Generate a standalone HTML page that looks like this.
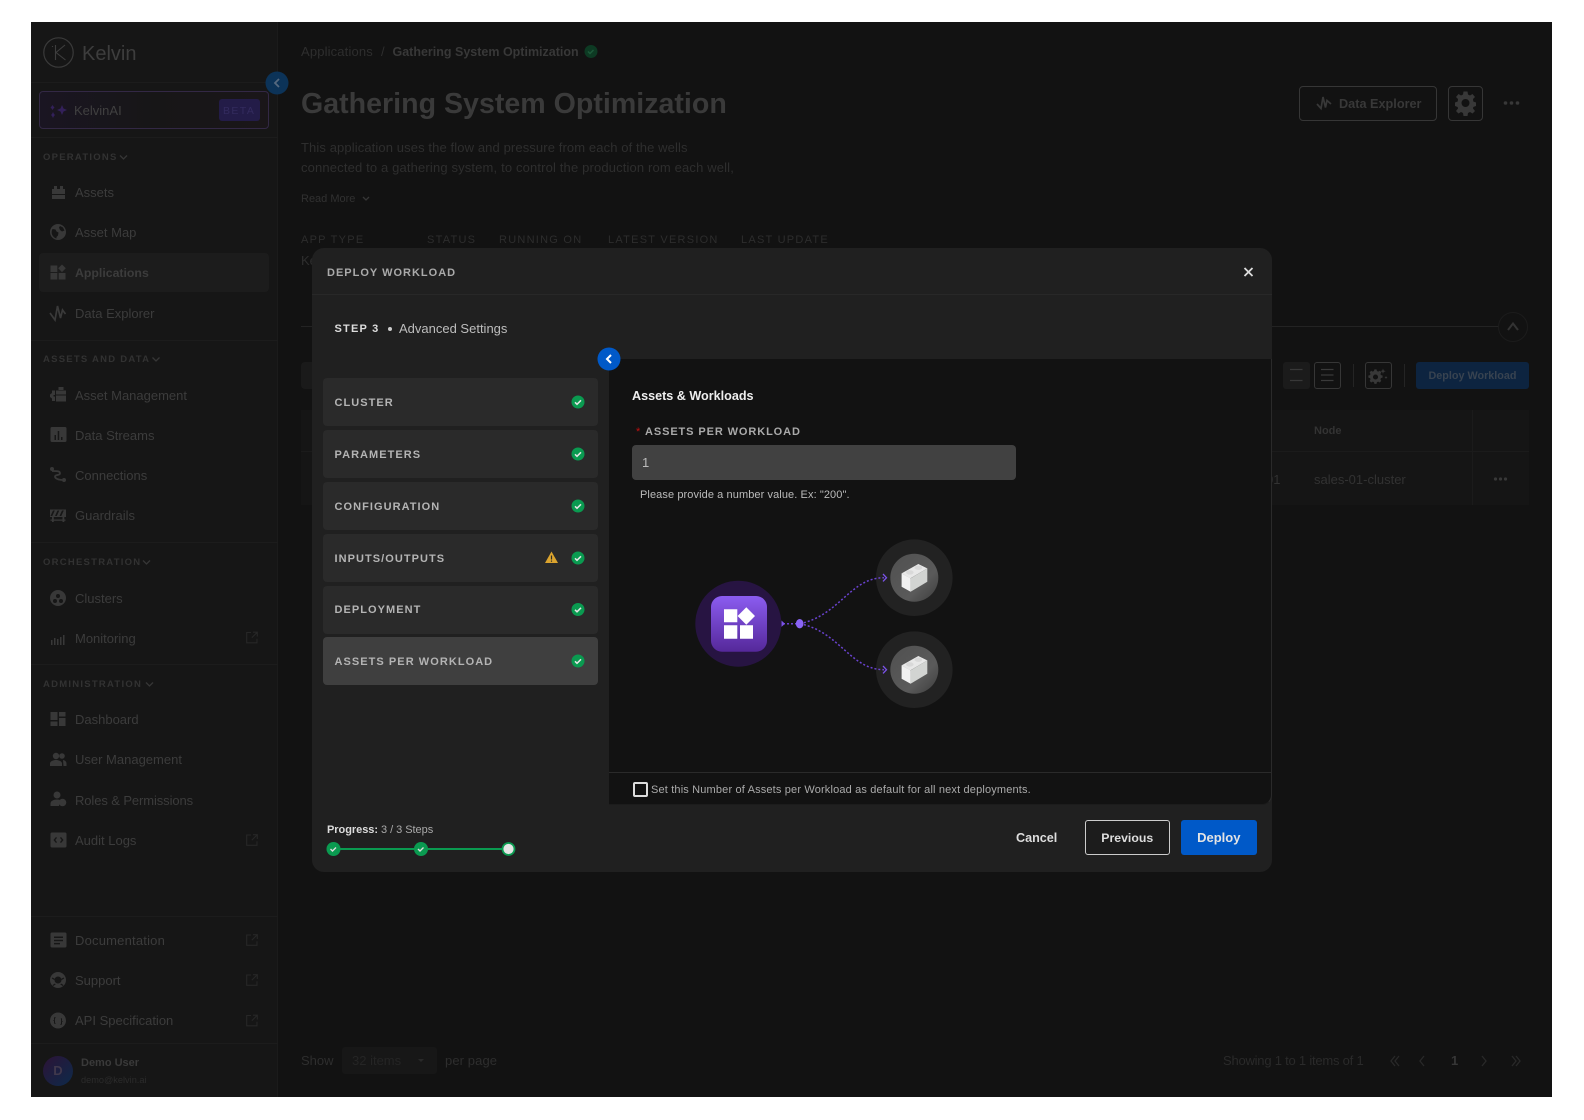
<!DOCTYPE html>
<html><head><meta charset="utf-8"><style>
html,body{margin:0;padding:0;background:#fff;width:1584px;height:1120px;overflow:hidden;font-family:"Liberation Sans",sans-serif}
#f{position:absolute;left:31px;top:22px;width:1521px;height:1075px;background:#121212}
.a{position:absolute}
.t{position:absolute;white-space:nowrap;line-height:20px;height:20px}
.n{color:#3c3c3c;font-size:13px;left:75px;margin-top:.7px}
.h{color:#323232;font-size:9.5px;font-weight:bold;letter-spacing:1.25px;left:43px;margin-top:1px}
.m{color:#2e2e2e;font-size:13px}
.c{color:#2d2d2d;font-size:11px;letter-spacing:1.25px;margin-top:1px}
.s{position:absolute;left:323px;width:274.5px;height:48px;background:#2a2a2a;border-radius:4px}
.l{color:#b4b4b4;font-size:11px;font-weight:bold;letter-spacing:1.05px;left:334.5px;margin-top:.8px}
svg{position:absolute;left:0;top:0}
</style></head><body>
<div id="f"></div>
<div class="a" style="left:31px;top:22px;width:247px;height:1075px;background:#161616;border-right:1px solid #1b1b1b;box-sizing:border-box"></div>
<div class="a" style="left:31px;top:82px;width:247px;height:1px;background:#1c1c1c"></div>
<div class="a" style="left:31px;top:137px;width:247px;height:1px;background:#1c1c1c"></div>
<div class="a" style="left:31px;top:340px;width:247px;height:1px;background:#1c1c1c"></div>
<div class="a" style="left:31px;top:542px;width:247px;height:1px;background:#1c1c1c"></div>
<div class="a" style="left:31px;top:664px;width:247px;height:1px;background:#1c1c1c"></div>
<div class="a" style="left:31px;top:916px;width:247px;height:1px;background:#1c1c1c"></div>
<div class="a" style="left:31px;top:1043px;width:247px;height:1px;background:#1c1c1c"></div>
<div class="a" style="left:39px;top:91px;width:230px;height:38px;box-sizing:border-box;border:1px solid #332845;border-radius:4px;background:linear-gradient(90deg,#1a1522,#171617 50%,#1a1619)"></div>
<div class="a" style="left:219px;top:99px;width:41px;height:22px;background:#231c48;border-radius:3px"></div>
<div class="a" style="left:39px;top:253px;width:230px;height:39px;background:#1c1c1c;border-radius:4px"></div>
<div class="t" style="left:82px;top:41px;line-height:26px;height:26px;font-size:20px;color:#3d3d3d">Kelvin</div>
<div class="t" style="left:74px;top:100.7px;font-size:13px;color:#404040">KelvinAI</div>
<div class="t" style="left:223px;top:100.7px;font-size:10.5px;letter-spacing:1.4px;color:#332b5e">BETA</div>
<div class="t h" style="top:147px">OPERATIONS</div>
<div class="t n" style="top:182px">Assets</div>
<div class="t n" style="top:222px">Asset Map</div>
<div class="t n" style="top:262px;font-weight:bold;font-size:12.3px">Applications</div>
<div class="t n" style="top:303px">Data Explorer</div>
<div class="t h" style="top:349px">ASSETS AND DATA</div>
<div class="t n" style="top:385px">Asset Management</div>
<div class="t n" style="top:425px">Data Streams</div>
<div class="t n" style="top:465px">Connections</div>
<div class="t n" style="top:505.5px">Guardrails</div>
<div class="t h" style="top:552px">ORCHESTRATION</div>
<div class="t n" style="top:588px">Clusters</div>
<div class="t n" style="top:628px">Monitoring</div>
<div class="t h" style="top:674px">ADMINISTRATION</div>
<div class="t n" style="top:709px">Dashboard</div>
<div class="t n" style="top:749px">User Management</div>
<div class="t n" style="top:790px;letter-spacing:-.1px">Roles &amp; Permissions</div>
<div class="t n" style="top:830px">Audit Logs</div>
<div class="t n" style="top:930px;letter-spacing:.2px">Documentation</div>
<div class="t n" style="top:970px">Support</div>
<div class="t n" style="top:1010.5px">API Specification</div>
<div class="a" style="left:43px;top:1056px;width:30px;height:30px;border-radius:50%;background:linear-gradient(135deg,#2c1336,#0d2a4a)"></div>
<div class="t" style="left:43px;top:1061px;width:30px;text-align:center;font-size:13px;font-weight:bold;color:#40384c">D</div>
<div class="t" style="left:81px;top:1053px;font-size:11px;font-weight:bold;color:#3a3a3a">Demo User</div>
<div class="t" style="left:81px;top:1070px;font-size:9.2px;color:#2c2c2c">demo@kelvin.ai</div>

<div class="t m" style="left:301px;top:41.7px;letter-spacing:.15px">Applications</div>
<div class="t m" style="left:381px;top:41.7px">/</div>
<div class="t" style="left:392.5px;top:41.7px;font-size:12.5px;font-weight:bold;color:#383838">Gathering System Optimization</div>
<div class="t" style="left:301px;top:86px;line-height:36px;height:36px;font-size:28.6px;font-weight:bold;color:#3a3a3a">Gathering System Optimization</div>
<div class="t m" style="left:301px;top:138px;letter-spacing:.11px">This application uses the flow and pressure from each of the wells</div>
<div class="t m" style="left:301px;top:158px;letter-spacing:.15px">connected to a gathering system, to control the production rom each well,</div>
<div class="t" style="left:301px;top:189px;font-size:11px;color:#313131">Read More</div>
<div class="t c" style="left:301px;top:229px">APP TYPE</div>
<div class="t c" style="left:427px;top:229px">STATUS</div>
<div class="t c" style="left:499px;top:229px">RUNNING ON</div>
<div class="t c" style="left:608px;top:229px">LATEST VERSION</div>
<div class="t c" style="left:741px;top:229px">LAST UPDATE</div>
<div class="t m" style="left:301px;top:251px">Kelvin</div>
<div class="a" style="left:301px;top:326px;width:1198px;height:1px;background:#232323"></div>
<div class="a" style="left:1498px;top:312px;width:30px;height:30px;box-sizing:border-box;border:1px solid #1c1c1c;border-radius:50%"></div>
<div class="a" style="left:1299px;top:86px;width:138px;height:35px;box-sizing:border-box;border:1px solid #363636;border-radius:4px"></div>
<div class="t" style="left:1339px;top:94px;font-size:12.7px;font-weight:bold;color:#383838">Data Explorer</div>
<div class="a" style="left:1448px;top:86px;width:35px;height:35px;box-sizing:border-box;border:1px solid #363636;border-radius:4px"></div>
<div class="a" style="left:301px;top:362px;width:60px;height:27px;background:#1a1a1a;border-radius:4px"></div>
<div class="a" style="left:1283px;top:362px;width:27px;height:27px;background:#1b1b1b;border-radius:3px"></div>
<div class="a" style="left:1314px;top:362px;width:27px;height:27px;box-sizing:border-box;border:1px solid #363636;border-radius:3px"></div>
<div class="a" style="left:1352.5px;top:364px;width:1px;height:23px;background:#242424"></div>
<div class="a" style="left:1365px;top:362px;width:27px;height:27px;box-sizing:border-box;border:1px solid #363636;border-radius:3px"></div>
<div class="a" style="left:1403.5px;top:364px;width:1px;height:23px;background:#242424"></div>
<div class="a" style="left:1416px;top:362px;width:113px;height:27px;background:#0d2440;border-radius:3px"></div>
<div class="t" style="left:1416px;top:365.5px;width:113px;text-align:center;font-size:10.8px;font-weight:bold;color:#384350">Deploy Workload</div>
<div class="a" style="left:301px;top:410px;width:1228px;height:95px;background:#151515"></div>
<div class="a" style="left:301px;top:451px;width:1228px;height:1px;background:#1b1b1b"></div>
<div class="a" style="left:1472px;top:410px;width:1px;height:95px;background:#1b1b1b"></div>
<div class="t" style="left:1314px;top:420.7px;font-size:11px;font-weight:bold;color:#333">Node</div>
<div class="t m" style="left:1314px;top:469.5px;color:#323232">sales-01-cluster</div>
<div class="t m" style="left:1266px;top:469.5px;color:#323232">01</div>
<div class="t m" style="left:301px;top:1051px">Show</div>
<div class="a" style="left:342px;top:1047px;width:95px;height:27px;background:#171717;border-radius:3px"></div>
<div class="t m" style="left:352px;top:1051px;color:#252525">32 items</div>
<div class="t m" style="left:445px;top:1051px;letter-spacing:.1px">per page</div>
<div class="t m" style="left:1223px;top:1051px;letter-spacing:-.22px;color:#2a2a2a">Showing 1 to 1 items of 1</div>
<div class="t m" style="left:1451px;top:1051px;color:#363636;font-weight:bold">1</div>

<svg width="1584" height="1120" viewBox="0 0 1584 1120" fill="none">
<defs><path id="x" d="M-1-5h-4.300v10.300h10.300v-4M1-5.300h4.300v4.300M5.300-5.300l-5.500 5.500" stroke="#272727" stroke-width="1.100"/></defs>
<circle cx="58.5" cy="52.5" r="14.7" stroke="#3a3a3a" stroke-width="1.2"/>
<path d="M55.5 45v15M65 45l-9 7.5 9.5 7.5M52.5 46v1" stroke="#3e3e3e" stroke-width="1.1"/>
<circle cx="277" cy="83" r="11.5" fill="#0c3358"/><path d="M279 79l-4 4 4 4" stroke="#56697f" stroke-width="1.8"/>
<path d="M62 105l1.500 3.500 3.500 1.500-3.500 1.500-1.500 3.500-1.500-3.500-3.500-1.500 3.500-1.500zM52.500 105l1 1.500 1 1-1 1-1 1.500-1-1.500-1-1 1-1zM53 112l1 2 1 1-1 1-1 2-1-2-1-1 1-1z" fill="#33205a"/>
<g fill="#383838">
<path d="M52 189h13v5H52zM52 195h13v4H52zM54 186h3v3h-3zM60 186h3v3h-3z"/>
<path fill-rule="evenodd" d="M58 224a8 8 0 100 16 8 8 0 000-16zm-5.500 5l3 .500 1 2 2 1-.500 3-1.500 1.500v1.500a6.500 6.500 0 01-4-9.500zM60 226l3 1.500 1.500 3-2.500 1-2-1.500-1-2.500z"/>
<path d="M50.500 265.500h6.800v6.500h-6.800zM50.500 273h6.800v6.500h-6.800zM58.700 273h6.800v6.500h-6.800zM62 264.500l3.800 3.800-3.800 3.800-3.800-3.800z"/>
<path d="M50 394.500l2-1.500v-2.500h3v4.500h-1.500v1.500h1.500v4.500h-3v-2.500l-2-1.500zM56 390.500h10v4H56zM58.500 387h5v3h-5zM56 395.500h10v6H56z"/>
<path fill-rule="evenodd" d="M52 427h13a1.500 1.500 0 011.500 1.500v12a1.500 1.500 0 01-1.500 1.500H52a1.500 1.500 0 01-1.500-1.500v-12a1.500 1.500 0 011.500-1.500zm2.500 8v5h1.500v-5zm3.200-4v9h1.500v-9zm3.300 6v3h1.500v-3z"/>
<circle cx="52" cy="469" r="2"/><circle cx="64" cy="480" r="2"/>
<path fill-rule="evenodd" d="M50 509.500h16v7.500H50zM53 510.500l-2.500 5.500h1.800l2.500-5.500zM57.500 510.500l-2.500 5.500h1.800l2.500-5.500zM62 510.500l-2.500 5.500h1.800l2.500-5.500z"/>
<path d="M52 517h1.800v5H52zM62.500 517h1.800v5h-1.800zM50.500 519.500h15v1.200h-15z"/>
<path fill-rule="evenodd" d="M58 590a8 8 0 100 16 8 8 0 000-16zm0 4a2 2 0 100 4 2 2 0 000-4zm-3 5a2 2 0 100 4 2 2 0 000-4zm6 0a2 2 0 100 4 2 2 0 000-4z"/>
<path d="M51 640h1.500v5H51zM54 638h1.500v7H54zM57 639h1.500v6H57zM60 637h1.500v8H60zM63 635h1.500v10H63z"/>
<path d="M50.500 712h7v8h-7zM50.500 721.500h7v4.500h-7zM59 712h6.500v4.500H59zM59 718h6.500v8H59z"/>
<circle cx="56" cy="756" r="3.200"/><circle cx="62" cy="756" r="2.800"/><path d="M50 766v-2.500c0-2 3-3.500 6-3.500s6 1.500 6 3.500v2.500zM63 760c2 .300 3.500 1.500 3.500 3.500v2.500H63.500z"/>
<circle cx="57" cy="795" r="3.500"/><path d="M50.500 806v-2.500c0-2.500 3-4 6.500-4 1 0 2 .100 3 .500l-1 6z"/><circle cx="62.500" cy="802.500" r="3.800"/>
<path fill-rule="evenodd" d="M52 832.500h13a1.500 1.500 0 011.500 1.500v12a1.500 1.500 0 01-1.500 1.500H52a1.500 1.500 0 01-1.500-1.500v-12a1.500 1.500 0 011.500-1.500zm4 4.500l-2.500 3 2.500 3 1-.900-1.700-2.100 1.700-2.100zm5 0l-1 .900 1.700 2.100-1.700 2.100 1 .900 2.500-3z"/>
<path fill-rule="evenodd" d="M52 932.500h13a1.500 1.500 0 011.500 1.500v12a1.500 1.500 0 01-1.500 1.500H52a1.500 1.500 0 01-1.500-1.500v-12a1.500 1.500 0 011.500-1.500zm2 4v1.500h9v-1.500zm0 3.200v1.500h9v-1.500zm0 3.200v1.500h6v-1.500z"/>
<path fill-rule="evenodd" d="M58 972a8 8 0 100 16 8 8 0 000-16zm0 4.500a3.500 3.500 0 100 7 3.500 3.500 0 000-7zm-5.500 1l2.500 1.500-.700 1-2.500-1.500zm11 0l.700 1-2.500 1.500-.700-1zm-8.500 6l.700 1-2.500 1.500-.700-1zm6 0l2.500 1.500-.700 1-2.500-1.500z"/>
<path fill-rule="evenodd" d="M58 1012.500a8 8 0 100 16 8 8 0 000-16zm-2.500 4.500c-1.500 0-1.500 1-1.500 2v1l-1 .500 1 .500v1c0 1 0 2 1.500 2v-1c-.500 0-.500-.500-.500-1v-1.500l-.500-.500.500-.500V1019c0-.500 0-1 .500-1zm5 0v1c.500 0 .500.500.500 1v1.500l.500.500-.500.500v1.500c0 .500 0 1-.500 1v1c1.500 0 1.500-1 1.500-2v-1l1-.500-1-.500v-1c0-1 0-2-1.500-2z"/>
<path fill-rule="evenodd" d="M1466 92a11 11 0 00-2 0l-.500 3-2 1-2.500-1.500-2.500 3 2 2-.300 2.500-2.700 1v3.500l2.700 1 .300 1.500-2 2.500 2.500 2.500 2.500-1.500 2 1 .500 3h4l.500-3 2-1 2.500 1.500 2.500-2.500-2-2.500.300-1.500 2.700-1v-3.500l-2.700-1-.300-2.500 2-2-2.500-3-2.500 1.500-2-1-.500-3zm0 7.500a4 4 0 110 8 4 4 0 010-8z" transform="translate(-.500 -.5)"/>
<path fill-rule="evenodd" d="M1377 370.500l.500 2 1.500.700 1.800-1 1.800 1.800-1 1.800.500 1.500 2 .500v2.500l-2 .500-.500 1.500 1 1.800-1.800 1.800-1.800-1-1.500.700-.500 2h-2.500l-.500-2-1.500-.700-1.800 1-1.800-1.800 1-1.800-.500-1.500-2-.500v-2.500l2-.500.500-1.500-1-1.800 1.800-1.800 1.800 1 1.500-.700.500-2zm-1.200 6a3 3 0 100 6 3 3 0 000-6z" transform="translate(1375.500 377) scale(.85) translate(-1375.800 -379.500)"/>
<path d="M1383 368.500l.700 2 2 .700-2 .700-.700 2-.700-2-2-.700 2-.700zM1386 376l.500 1 1 .500-1 .500-.500 1-.500-1-1-.500 1-.500z"/>
<circle cx="1505.500" cy="103" r="1.800"/><circle cx="1511.500" cy="103" r="1.800"/><circle cx="1517.500" cy="103" r="1.800"/>
<circle cx="1495.500" cy="479" r="1.600"/><circle cx="1500.500" cy="479" r="1.600"/><circle cx="1505.500" cy="479" r="1.600"/>
</g>
<g stroke="#303030" stroke-width="1.300">
<path d="M120 155.500l3.500 3.500 3.500-3.500M152.500 357.500l3.500 3.500 3.500-3.500M143 560.500l3.500 3.500 3.500-3.500M146 682.500l3.500 3.500 3.500-3.500M363 197l3 3 3-3" stroke="#363636"/>
<path d="M1290 369.500h12.500M1290 380.500h12.500" stroke="#383838"/>
<path d="M1321 369.500h12.500M1321 375h12.500M1321 380.500h12.500" stroke="#3a3a3a"/>
<path d="M1508 330l5-6.500 5 6.500" stroke="#333" stroke-width="2"/>
<path d="M50 313l5 7 2.500-14 3 12 2-8 3 4" stroke="#3a3a3a" stroke-width="1.700"/>
<path d="M1317 104l4 4.500 2-11.500 2.500 10.500 1.500-7 4 3.500" stroke="#383838" stroke-width="1.700"/>
<path d="M52 471c7 0 8 .500 8 2.500s-5 1-5 3 2 3 7 3.500" stroke="#383838" stroke-width="1.800"/>
<path d="M1395 1056l-4 5 4 5M1399 1056l-4 5 4 5M1424 1056l-4 5 4 5M1482 1056l4 5-4 5M1512 1056l4 5-4 5M1516 1056l4 5-4 5" stroke="#292929"/>
</g>
<use href="#x" x="252" y="637.500"/><use href="#x" x="252" y="840"/><use href="#x" x="252" y="940"/><use href="#x" x="252" y="980"/><use href="#x" x="252" y="1020.500"/>
<path d="M418 1059l3 3 3-3z" fill="#292929"/>
<circle cx="591" cy="51.500" r="6.500" fill="#0d3a23"/><path d="M588 51.500l2 2 3.500-3.500" stroke="#1d5a3a" stroke-width="1.400"/>
</svg>

<!-- modal -->
<div class="a" style="left:311.500px;top:248px;width:960.500px;height:624px;background:#202020;border-radius:12px"></div>
<div class="a" style="left:311.500px;top:294px;width:960.500px;height:1px;background:#282828"></div>
<div class="a" style="left:609px;top:359px;width:663px;height:446px;background:#121212;border-right:1px solid #2a2a2a;border-bottom:1px solid #1c1c1c;box-sizing:border-box;border-bottom-right-radius:10px"></div>
<div class="a" style="left:609px;top:772px;width:662px;height:1px;background:#2a2a2a"></div>
<div class="t" style="left:327px;top:262.500px;font-size:11px;font-weight:bold;letter-spacing:1px;color:#aaa">DEPLOY WORKLOAD</div>
<div class="t" style="left:334.500px;top:319px;font-size:11px;font-weight:bold;letter-spacing:1.200px;color:#ddd">STEP 3</div>
<div class="a" style="left:387.500px;top:327px;width:4px;height:4px;border-radius:50%;background:#ccc"></div>
<div class="t" style="left:399px;top:319px;font-size:13px;color:#bdbdbd">Advanced Settings</div>

<div class="s" style="top:378px"></div><div class="s" style="top:430px"></div><div class="s" style="top:482px"></div><div class="s" style="top:534px"></div><div class="s" style="top:585.500px"></div><div class="s" style="top:637px;background:#3f3f3f"></div>
<div class="t l" style="top:392px">CLUSTER</div>
<div class="t l" style="top:444px">PARAMETERS</div>
<div class="t l" style="top:496px">CONFIGURATION</div>
<div class="t l" style="top:548px">INPUTS/OUTPUTS</div>
<div class="t l" style="top:599.500px">DEPLOYMENT</div>
<div class="t l" style="top:651px">ASSETS PER WORKLOAD</div>

<div class="t" style="left:632px;top:385.500px;font-size:12.600px;font-weight:bold;color:#eee">Assets &amp; Workloads</div>
<div class="t" style="left:636px;top:422px;font-size:11px;color:#c01010">*</div>
<div class="t" style="left:645px;top:421.700px;font-size:11px;letter-spacing:.9px;color:#aaa;font-weight:bold">ASSETS PER WORKLOAD</div>
<div class="a" style="left:632px;top:445px;width:384px;height:35px;background:#414141;border-radius:4px"></div>
<div class="t" style="left:642px;top:453px;font-size:13px;color:#bbb">1</div>
<div class="t" style="left:640px;top:484.700px;font-size:11px;color:#bbb;letter-spacing:.09px">Please provide a number value. Ex: "200".</div>
<div class="a" style="left:632.500px;top:782px;width:15.500px;height:15px;box-sizing:border-box;border:2px solid #ddd;border-radius:2px"></div>
<div class="t" style="left:651px;top:779.700px;font-size:11px;color:#aaa;letter-spacing:.16px">Set this Number of Assets per Workload as default for all next deployments.</div>
<div class="t" style="left:327px;top:819.700px;font-size:11px;color:#aaa;letter-spacing:-.04px"><b style="color:#ddd">Progress:</b> 3 / 3 Steps</div>
<div class="t" style="left:1016px;top:827.500px;font-size:12.600px;font-weight:bold;color:#ddd">Cancel</div>
<div class="a" style="left:1085px;top:820px;width:84.500px;height:35px;box-sizing:border-box;border:1px solid #ccc;border-radius:3px;background:#1c1c1c"></div>
<div class="t" style="left:1085px;top:827.500px;width:84.500px;text-align:center;font-size:12.300px;font-weight:bold;color:#ddd">Previous</div>
<div class="a" style="left:1181px;top:820px;width:75.500px;height:35px;background:#0059c8;border-radius:3px"></div>
<div class="t" style="left:1181px;top:827.500px;width:75.500px;text-align:center;font-size:13px;font-weight:bold;color:#e4e4e4">Deploy</div>

<svg width="1584" height="1120" viewBox="0 0 1584 1120" fill="none">
<defs>
<linearGradient id="p" x1="0" y1="0" x2="0" y2="1"><stop offset="0" stop-color="#8b5cf0"/><stop offset="1" stop-color="#55289a"/></linearGradient>
<linearGradient id="q" x1="0" y1="0" x2="1" y2="1"><stop offset="0" stop-color="#505050"/><stop offset=".65" stop-color="#5a5a5a"/><stop offset="1" stop-color="#3c3c3c"/></linearGradient>
<g id="ck"><circle r="6.500" fill="#0a9a50"/><path d="M-3 .3l2 2 4-4" stroke="#e5e5e5" stroke-width="1.500"/></g>
<g id="br">
<circle r="38.300" fill="#222"/><circle r="24" fill="url(#q)"/>
<path d="M-12.700-4.300L4-13.700 13-9.300-4 .7z" fill="#e8e8e8"/>
<path d="M-12.700-4.300L-3.700.7V14L-12.700 9z" fill="#f1f1f1"/>
<path d="M-3.700.7L13-9.300V4L-3.700 14z" fill="#d2d4d2"/>
<ellipse cx="-4.500" cy="-5.300" rx="3.800" ry="2.200" fill="#d9d9d9"/>
<ellipse cx="4" cy="-10" rx="3.800" ry="2.200" fill="#d9d9d9"/>
</g>
</defs>
<circle cx="609" cy="359" r="11.500" fill="#0059c8"/><path d="M611 355l-4 4 4 4" stroke="#fff" stroke-width="2"/>
<path d="M1244.500 268l8 8M1252.500 268l-8 8" stroke="#ddd" stroke-width="1.800"/>
<use href="#ck" x="578" y="402"/><use href="#ck" x="578" y="454"/><use href="#ck" x="578" y="506"/><use href="#ck" x="578" y="558"/><use href="#ck" x="578" y="609.500"/><use href="#ck" x="578" y="661"/>
<path d="M551.500 551.500l6.500 11.500h-13z" fill="#dba42e"/><path d="M551.500 555.500v4M551.500 560.500v1.300" stroke="#2a2a2a" stroke-width="1.200"/>
<path d="M333 849h175" stroke="#0a9a50" stroke-width="2"/>
<circle cx="333.500" cy="849" r="7" fill="#0a9a50"/><path d="M330.500 849l2 2 3.500-3.500" stroke="#ddd" stroke-width="1.400"/>
<circle cx="421" cy="849" r="7" fill="#0a9a50"/><path d="M418 849l2 2 3.500-3.500" stroke="#ddd" stroke-width="1.400"/>
<circle cx="508.500" cy="849" r="6" fill="#e4e4e4" stroke="#0a9a50" stroke-width="1.800"/>
<circle cx="738.300" cy="623.700" r="43" fill="#271442"/>
<rect x="711" y="596" width="56" height="55.700" rx="11" fill="url(#p)"/>
<path d="M724 609.300h13.300v13H724zM724 625.300h13.300v13.400H724zM740 625.300h13v13.400h-13zM746.300 607.300l8.700 8.700-8.700 8.700-8.700-8.700z" fill="#fff"/>
<use href="#br" x="914.300" y="577.700"/>
<use href="#br" x="914.300" y="669.700"/>
<path d="M783 623.700H800M800 623.700C840 615 850 578 884 577.700M800 623.700C840 632 850 669.500 884 669.700" stroke="#6a43d0" stroke-width="1.500" stroke-dasharray="2 2"/>
<path d="M781.500 620.500l3.500 3.200-3.500 3.200z" fill="#7a52e8"/>
<ellipse cx="799.700" cy="623.700" rx="3.800" ry="4.700" fill="#8a64f5"/>
<path d="M883 574l3.500 3.700-3.500 3.700M883 666l3.500 3.700-3.500 3.700" stroke="#7a52e8" stroke-width="1.300"/>
</svg>
</body></html>
